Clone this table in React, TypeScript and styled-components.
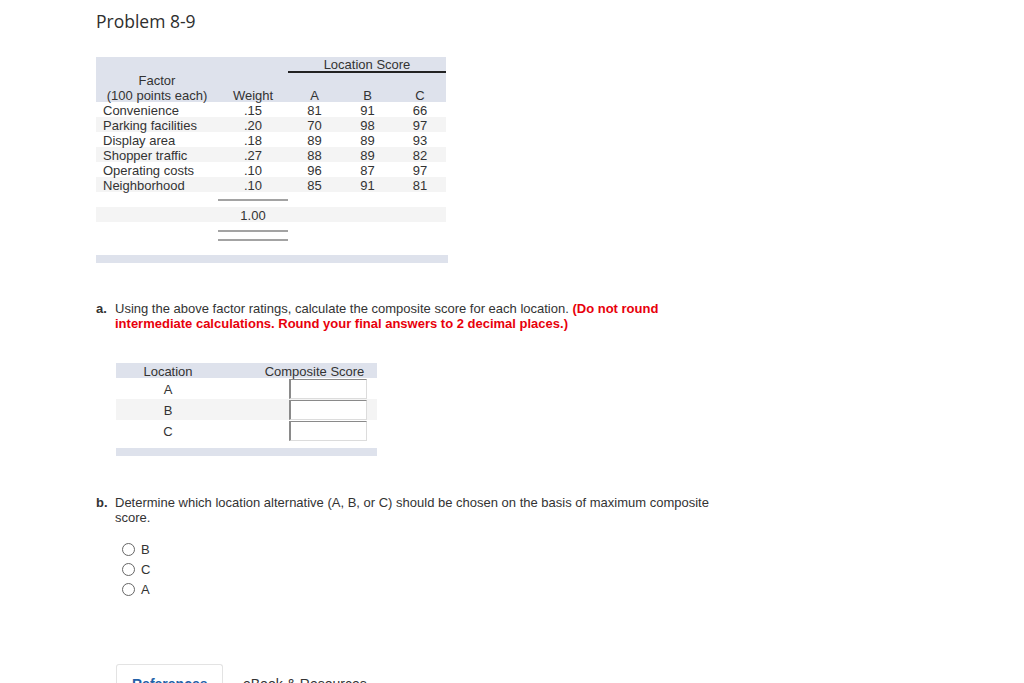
import React from "react";
import styled, { createGlobalStyle } from "styled-components";

const Global = createGlobalStyle`
  html, body { margin: 0; padding: 0; background: #fff; }
  body {
    font-family: "Liberation Sans", Arial, sans-serif;
    font-size: 13px;
    line-height: 15px;
    color: #333;
  }
`;

const Page = styled.div`
  padding: 11px 0 0 96px;
  height: 683px;
  box-sizing: border-box;
  overflow: hidden;
`;

const Title = styled.h2`
  margin: 0;
  font-family: "Open Sans", "Liberation Sans", sans-serif;
  font-weight: 400;
  font-size: 17.5px;
  line-height: 20px;
  color: #2e2e2e;
`;

const FactorTable = styled.div`
  margin-top: 26px;
  width: 350px;
`;

const Grid = styled.div<{ $bg?: string }>`
  display: grid;
  grid-template-columns: 122px 70px 53px 53px 52px;
  grid-auto-rows: 15px;
  height: 15px;
  background: ${(p) => p.$bg || "transparent"};
`;

const HeadBlock = styled.div`
  background: #dee2ec;
  height: 45px;
  display: grid;
  grid-template-columns: 122px 70px 158px;
  grid-template-rows: 16px 14px 15px;
`;

const LocHead = styled.div`
  grid-column: 3;
  grid-row: 1;
  text-align: center;
  border-bottom: 2px solid #222;
  line-height: 14px;
  padding-top: 1px;
  box-sizing: border-box;
`;

const Cell = styled.div<{ $align?: string; $pad?: number }>`
  text-align: ${(p) => p.$align || "center"};
  padding-left: ${(p) => p.$pad || 0}px;
  padding-top: 1px;
  height: 15px;
  box-sizing: border-box;
  line-height: 15px;
  white-space: nowrap;
`;

const HCell = styled(Cell)<{ $col: number; $row: number }>`
  grid-column: ${(p) => p.$col};
  grid-row: ${(p) => p.$row};
  height: ${(p) => (p.$row === 2 ? 14 : 15)}px;
  line-height: ${(p) => (p.$row === 2 ? 14 : 15)}px;
`;

const Letters = styled(HCell)`
  display: grid;
  grid-template-columns: 53px 53px 52px;
`;

const Rule = styled.div<{ $gap?: number }>`
  grid-column: 2;
  height: 2px;
  background: #a3a3a3;
  margin-top: ${(p) => p.$gap || 0}px;
`;

const RuleRow = styled.div<{ $h: number }>`
  display: grid;
  grid-template-columns: 122px 70px;
  align-content: start;
  height: ${(p) => p.$h}px;
`;

const Band = styled.div<{ $w: number; $h: number; $mt: number }>`
  width: ${(p) => p.$w}px;
  height: ${(p) => p.$h}px;
  margin-top: ${(p) => p.$mt}px;
  background: #dee2ec;
`;

const Question = styled.div<{ $mt: number }>`
  display: flex;
  margin-top: ${(p) => p.$mt}px;
  width: 620px;
`;

const Letter = styled.span`
  font-weight: bold;
  width: 19px;
  flex: none;
`;

const Red = styled.span`
  color: #e8000b;
  font-weight: bold;
`;

const ScoreTable = styled.div`
  margin: 32px 0 0 20px;
  width: 261px;
`;

const ScoreRow = styled.div<{ $bg?: string; $h: number }>`
  display: grid;
  grid-template-columns: 104px 32px 125px;
  height: ${(p) => p.$h}px;
  align-items: center;
  background: ${(p) => p.$bg || "transparent"};
`;

const Input = styled.input`
  box-sizing: border-box;
  width: 78px;
  height: 20px;
  margin: 0 0 0 37px;
  padding: 0 3px;
  border-style: solid;
  border-width: 1px 1px 1px 2px;
  border-color: #8a8a8a #dcdcdc #dcdcdc #8a8a8a;
  background: #fff;
  font: inherit;
`;

const Options = styled.div`
  margin: 14px 0 0 20px;
  display: flex;
  flex-direction: column;
`;

const Option = styled.label`
  display: flex;
  align-items: center;
  height: 20px;
  gap: 6px;
`;

const Circle = styled.span`
  width: 11px;
  height: 11px;
  border: 1px solid #666;
  border-radius: 50%;
  margin-left: 6px;
  background: #fff;
`;

const Tabs = styled.div`
  margin: 65px 0 0 20px;
  display: flex;
  align-items: flex-start;
`;

const Tab = styled.div<{ $active?: boolean }>`
  height: 40px;
  box-sizing: border-box;
  font-size: 14px;
  line-height: 16px;
  padding: 11px ${(p) => (p.$active ? 15 : 20)}px 0;
  ${(p) =>
    p.$active
      ? `border: 1px solid #e3e3e3; border-bottom: none; border-radius: 3px 3px 0 0; color: #2361a8; font-weight: bold; width: 107px;`
      : `color: #333; padding-top: 12px;`}
`;

const rows = [
  ["Convenience", ".15", "81", "91", "66"],
  ["Parking facilities", ".20", "70", "98", "97"],
  ["Display area", ".18", "89", "89", "93"],
  ["Shopper traffic", ".27", "88", "89", "82"],
  ["Operating costs", ".10", "96", "87", "97"],
  ["Neighborhood", ".10", "85", "91", "81"],
];

export default function App() {
  return (
    <>
      <Global />
      <Page>
        <Title>Problem 8-9</Title>
        <FactorTable>
          <HeadBlock>
            <LocHead>Location Score</LocHead>
            <HCell $col={1} $row={2}>Factor</HCell>
            <HCell $col={1} $row={3}>(100 points each)</HCell>
            <HCell $col={2} $row={3}>Weight</HCell>
            <Letters $col={3} $row={3}>
              <span>A</span>
              <span>B</span>
              <span>C</span>
            </Letters>
          </HeadBlock>
          {rows.map((r, i) => (
            <Grid key={r[0]} $bg={i % 2 === 1 ? "#f4f4f4" : "#fff"}>
              <Cell $align="left" $pad={7}>{r[0]}</Cell>
              <Cell>{r[1]}</Cell>
              <Cell>{r[2]}</Cell>
              <Cell>{r[3]}</Cell>
              <Cell>{r[4]}</Cell>
            </Grid>
          ))}
          <RuleRow $h={15}>
            <Rule $gap={7} />
          </RuleRow>
          <Grid $bg="#f4f4f4">
            <Cell />
            <Cell>1.00</Cell>
          </Grid>
          <RuleRow $h={25}>
            <Rule $gap={8} />
            <Rule $gap={7} />
          </RuleRow>
        </FactorTable>
        <Band $w={352} $h={8} $mt={8} />

        <Question $mt={38}>
          <Letter>a.</Letter>
          <span>
            Using the above factor ratings, calculate the composite score for each location.{" "}
            <Red>(Do not round intermediate calculations. Round your final answers to 2 decimal places.)</Red>
          </span>
        </Question>

        <ScoreTable>
          <ScoreRow $bg="#dee2ec" $h={15}>
            <Cell>Location</Cell>
            <span />
            <Cell>Composite Score</Cell>
          </ScoreRow>
          {["A", "B", "C"].map((l, i) => (
            <ScoreRow key={l} $h={21} $bg={i === 1 ? "#f4f4f4" : "#fff"}>
              <Cell>{l}</Cell>
              <span />
              <Input aria-label={`Composite score ${l}`} />
            </ScoreRow>
          ))}
          <Band $w={261} $h={8} $mt={7} />
        </ScoreTable>

        <Question $mt={39}>
          <Letter>b.</Letter>
          <span>
            Determine which location alternative (A, B, or C) should be chosen on the basis of maximum composite score.
          </span>
        </Question>

        <Options>
          {["B", "C", "A"].map((o) => (
            <Option key={o}>
              <Circle />
              {o}
            </Option>
          ))}
        </Options>

        <Tabs>
          <Tab $active>References</Tab>
          <Tab>eBook &amp; Resources</Tab>
        </Tabs>
      </Page>
    </>
  );
}
